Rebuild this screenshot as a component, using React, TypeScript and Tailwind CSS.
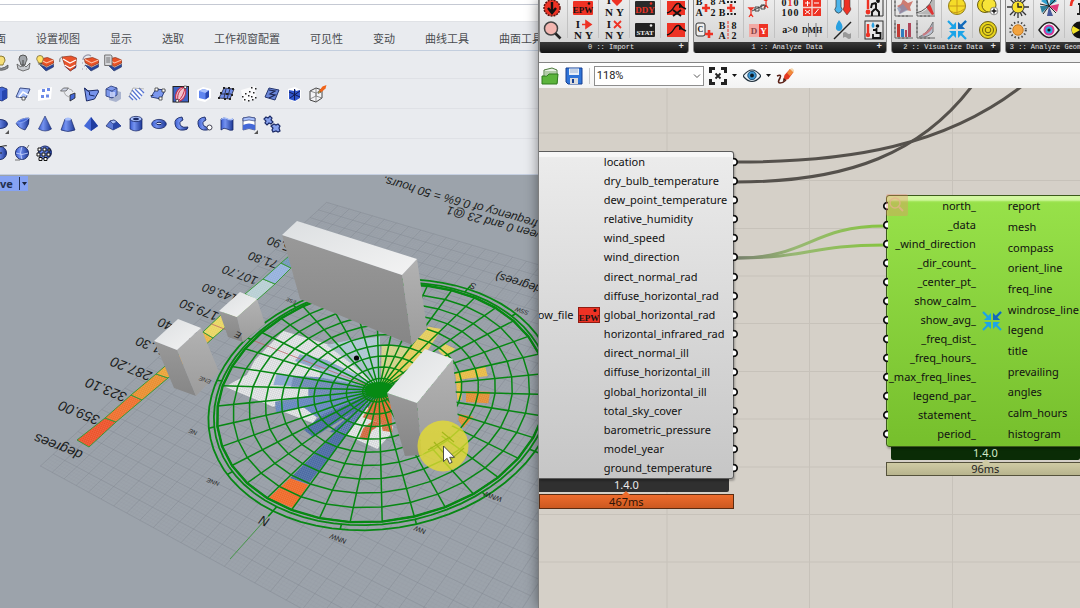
import React from "react";

/* ---------- perspective of the ground plane ---------- */
type Pt = [number, number];

function project(a: number, b: number): Pt {
  const w = 1 + 0.083 * a - 0.09 * b;
  return [(379 - 111.5 * a - 130.6 * b) / w, (390 - 24 * a + 75 * b) / w];
}
function polar(r: number, deg: number): Pt {
  const t = (deg * Math.PI) / 180;
  return project(r * Math.cos(t), r * Math.sin(t));
}
const fmt = (p: Pt) => `${p[0].toFixed(1)} ${p[1].toFixed(1)}`;
function ringPath(r: number, start: number, step: number) {
  let d = "";
  for (let t = start; t < start + 360; t += step) d += (d ? "L" : "M") + fmt(polar(r, t));
  return d + "Z";
}
function gridPath(step: number) {
  let d = "";
  const n = Math.round(1.4 / step);
  for (let i = -n; i <= n; i++) {
    const k = i * step;
    d += `M${fmt(project(k, -1.4))}L${fmt(project(k, 1.4))}M${fmt(project(-1.4, k))}L${fmt(project(1.4, k))}`;
  }
  return d;
}
function spokes() {
  let d = "";
  for (let t = 5; t < 360; t += 10) d += `M${fmt(polar(0, t))}L${fmt(polar(0.95, t))}`;
  return d;
}
function ticks() {
  let d = "";
  for (let i = 0; i < 16; i++) d += `M${fmt(polar(0.965, i * 22.5))}L${fmt(polar(i % 4 ? 1 : 1.04, i * 22.5))}`;
  return d;
}
const rings = [1, 2, 3, 4, 5, 6, 7, 8, 9, 10].map((k) => ringPath(k * 0.095, 5, 10)).join("");

/* filled cells of the rose, drawn three times larger from (180, 260) */
const cells: [string, string][] = [
  ["#eff0f0", "135,380 200,345 225,300 310,213 400,240 470,262 530,290 600,370 400,410 278,440"],
  ["#a9c3cf", "440,255 510,240 600,230 600,370 560,350 500,300"],
  ["#87a3cf", "360,283 440,300 585,372 570,380 420,330 345,303"],
  ["#9db9dc", "420,325 500,330 590,380 560,385 420,352"],
  ["#86a6d9", "290,342 340,347 335,378 280,375"],
  ["#6282b8", "340,347 420,352 590,385 590,395 385,410 385,382 332,380"],
  ["#5f82bb", "285,425 385,408 590,390 430,468 405,470 370,447 288,457"],
  ["#eff0f0", "310,455 370,442 410,472 400,490"],
  ["#44659f", "372,510 430,462 590,392 580,420 400,532"],
  ["#44659f", "450,515 540,440 590,400 540,490 500,525"],
  ["#44659f", "330,655 500,485 580,400 600,400 385,672"],
  ["#ee6420", "265,715 330,655 385,674 340,745"],
  ["#cfce83", "605,255 690,262 655,320 610,370 603,370"],
  ["#e2ca55", "690,260 745,200 785,207 740,275 640,370 610,368"],
  ["#e2ca55", "775,272 795,252 825,266 800,295"],
  ["#e6b83e", "825,340 915,318 923,348 828,360"],
  ["#e6b83e", "828,358 845,360 845,420 832,420"],
  ["#e08a2c", "858,394 930,395 925,430 858,426"],
  ["#e08a2c", "838,462 880,470 850,503 835,480"],
  ["#eff0f0", "545,462 560,440 640,500 632,522 592,567 500,525"],
  ["#e06428", "580,420 632,400 637,517 608,512 603,490 548,472"],
  ["#dd5a24", "550,505 578,482 606,490 575,512 562,540 538,536"],
];

const legendBar: [string, string][] = [
  ["#ec4c22", "77,440 105,418 116,422 89,447"],
  ["#ee6a26", "105,418 131,395 142,400 116,422"],
  ["#e88a28", "131,395 156,374 168,378 142,400"],
  ["#eba030", "156,374 180,353 191,358 168,378"],
  ["#ecb23c", "180,353 203,332 213,338 191,358"],
  ["#e8d45c", "203,332 224,312 236,318 213,338"],
  ["#dfe0a0", "224,312 245,294 257,300 236,318"],
  ["#b5cdd2", "245,294 263,279 275,284 257,300"],
  ["#91aedb", "263,279 281,263 291,268 275,284"],
  ["#6d93b8", "281,263 289,256 299,261 291,268"],
];

const sceneText: [string, number, number, number, number][] = [
  ["degrees", 58, 447, 14, 201],
  ["359.00", 79, 413, 14, 202],
  ["323.10", 106, 390, 14, 202],
  ["287.20", 131, 369, 14, 202],
  ["251.30", 155, 348, 13, 202],
  ["215.40", 177, 329, 13, 202],
  ["179.50", 199, 310, 13, 201],
  ["143.60", 220, 293, 12, 200],
  ["107.70", 240, 275, 12, 200],
  ["71.80", 263, 260, 12, 199],
  ["35.90", 282, 245, 12, 199],
  ["N", 264, 521, 13, 205],
  ["S", 473, 286, 9, 200],
  ["NE", 193, 432, 6, 200],
  ["NNE", 213, 482, 6, 200],
  ["NNW", 338, 539, 7, 200],
  ["NW", 420, 530, 7, 200],
  ["WNW", 493, 497, 7, 200],
  ["ESE", 291, 301, 5, 200],
  ["SSW", 522, 311, 6, 198],
];

const boxes: { top: string; left: string; right: string }[] = [
  { top: "297,221 417,259 402,275 282,235", left: "282,235 402,275 412,345 300,299", right: "402,275 417,259 427,329 412,345" },
  { top: "240,292 257,299 237,317 219,311", left: "219,311 237,317 243,342 228,337", right: "237,317 257,299 265,324 243,342" },
  { top: "178,319 201,328 177,350 154,341", left: "154,341 177,350 196,396 174,388", right: "177,350 201,328 219,372 196,396" },
  { top: "425,349 453,359 417,403 387,393", left: "387,393 417,403 422,455 405,456", right: "417,403 453,359 458,420 422,455" },
];

function Scene() {
  return (
    <svg className="block h-[433px] w-[539px] shrink-0" viewBox="0 175 539 433" role="img" aria-label="Wind rose model">
      <defs>
        <linearGradient id="topFace" x1="0" y1="0" x2="1" y2="1">
          <stop offset="0" stopColor="#dcdfe1" />
          <stop offset="1" stopColor="#f3f3f3" />
        </linearGradient>
        <linearGradient id="leftFace" x1="0" y1="0" x2="0" y2="1">
          <stop offset="0" stopColor="#999999" />
          <stop offset="1" stopColor="#868686" />
        </linearGradient>
        <linearGradient id="rightFace" x1="0" y1="0" x2="0" y2="1">
          <stop offset="0" stopColor="#b2b2b2" />
          <stop offset="1" stopColor="#9c9c9c" />
        </linearGradient>
        <pattern id="mesh" width="2" height="2" patternUnits="userSpaceOnUse" patternTransform="rotate(22)">
          <path d="M0 0H2M0 0V2" stroke="#ffffff" strokeWidth=".5" opacity=".35" fill="none" />
        </pattern>
        <pattern id="meshGray" width="2" height="2" patternUnits="userSpaceOnUse" patternTransform="rotate(22)">
          <path d="M0 0H2M0 0V2" stroke="#8d9399" strokeWidth=".6" opacity=".6" fill="none" />
        </pattern>
      </defs>
      <path d={gridPath(0.02)} stroke="#8a9099" strokeWidth="1" opacity=".08" fill="none" />
      <path d={gridPath(0.1)} stroke="#7d838b" strokeWidth="1" opacity=".32" fill="none" />
      <path d={`M${fmt(project(0, 1))}L230 559`} stroke="#4a9a4c" strokeWidth="1" />

      {legendBar.map(([c, p]) => (
        <g key={p}>
          <polygon points={p} fill={c} />
          <polygon points={p} fill="url(#mesh)" stroke="#3a9a3a" strokeWidth="1" />
        </g>
      ))}

      <g transform="translate(180 260) scale(.33333)">
        {cells.map(([c, p]) => (
          <polygon key={p} points={p} fill={c} />
        ))}
      </g>
      {cells.map(([c, p]) => {
        const pts = p
          .split(" ")
          .map((q) => q.split(",").map(Number))
          .map(([x, y]) => `${180 + x / 3},${260 + y / 3}`)
          .join(" ");
        return <polygon key={p} points={pts} fill={c === "#eff0f0" ? "url(#meshGray)" : "url(#mesh)"} />;
      })}
      <path d={`M${fmt(project(1.3, 0))}L${fmt(project(0, 0))}`} stroke="#c06a6a" strokeWidth="1" opacity=".8" />
      <g fill="none" stroke="#078813">
        <path d={rings} strokeWidth="1.5" />
        <path d={spokes()} strokeWidth="1.5" />
        <path d={ringPath(0.95, 5, 10)} strokeWidth="2.400" />
        <path d={ringPath(0.968, 0, 5)} strokeWidth="1.800" />
        <path d={ringPath(1, 0, 5)} strokeWidth="1.800" />
        <path d={ticks()} strokeWidth="1.6" />
      </g>
      <ellipse cx="379" cy="390" rx="14" ry="8" fill="#068a14" />
      <circle cx="356.500" cy="358" r="2.600" fill="#050505" />

      <g fill="#1b1d20" fontFamily="'Liberation Sans', sans-serif" fontStyle="italic">
        {sceneText.map(([t, x, y, s, r]) => (
          <text key={t} transform={`translate(${x} ${y}) rotate(${r})`} fontSize={s} textAnchor="middle" dominantBaseline="central">
            {t}
          </text>
        ))}
        <text transform="translate(384 176) rotate(196)" fontSize="12" textAnchor="end">
          shows frequency of 0.6% = 50 hours.
        </text>
        <text transform="translate(448 206) rotate(195.500)" fontSize="12" textAnchor="end">
          between 0 and 23 @1
        </text>
        <text transform="translate(497 272) rotate(197)" fontSize="12" textAnchor="end">
          (degrees)
        </text>
      </g>

      {boxes.map((b, i) => (
        <g key={b.top}>
          <polygon points={b.left} fill="url(#leftFace)" />
          <polygon points={b.right} fill="url(#rightFace)" />
          <polygon points={b.top} fill="url(#topFace)" />
          {i === 2 && (
            <text transform="translate(205 380) rotate(200)" fontSize="6" fontStyle="italic" fontFamily="'Liberation Sans', sans-serif" fill="#333" textAnchor="middle" dominantBaseline="central">
              ENE
            </text>
          )}
        </g>
      ))}
      <text transform="translate(238 335) rotate(205)" fontSize="9" fontStyle="italic" fontFamily="'Liberation Sans', sans-serif" fill="#222" textAnchor="middle" dominantBaseline="central">
        E
      </text>
      <circle cx="443" cy="446" r="25.500" fill="#e6dc2e" opacity=".78" />
      <path d="M428 450l22-13M434 442l16 18M442 432l12 10M448 462l16-14" stroke="#a4b81a" strokeWidth="1.200" fill="none" />
      <path d="M443.500 446v15.500l3.600-3.200 2.400 5.200 2.600-1.200-2.400-5h4.800z" fill="#fff" stroke="#3b3b3b" strokeWidth=".9" />
    </svg>
  );
}

/* ---------- modelling toolbar ---------- */
const BL = "#4468d8";
const DK = "#1b2a66";
const LT = "#a9c0fb";

const Layers = ({ front }: { front?: React.ReactNode }) => (
  <>
    <path d="M4 11l6 6 7.500-4v-3l-7 3z" fill="#27439c" stroke="#27355f" strokeWidth=".6" />
    <path d="M4 8.500l6.500 5 7-3.500V8l-7 3z" fill="#fff" stroke="#877" strokeWidth=".5" />
    <path d="M3.500 5l8-1.500L17.500 6v3l-7 3.500L4 8.500z" fill="#ea5226" stroke="#8c3018" strokeWidth=".7" />
    <path d="M4 5.500l6.500 3.500 7-3" stroke="#ffc1a6" fill="none" strokeWidth="1.100" />
    {front}
  </>
);
const bulb = (c: string) => (
  <g>
    <path d="M4 1.500a3.300 3.300 0 0 1 3.300 3.300c0 1.700-1.100 2.200-1.300 4.200H2.400C2.200 7 .7 6.500.7 4.800A3.300 3.300 0 0 1 4 1.500z" fill={c} stroke="#77683a" strokeWidth=".8" />
    <path d="M2.500 10h3.500" stroke="#444" strokeWidth="1.200" />
  </g>
);

const row1: Record<string, React.ReactNode> = {
  "Show object": (
    <>
      <path d="M10 2a4 4 0 0 1 4 4c0 2-1.500 2.500-2 5H8c-.5-2.500-2-3-2-5a4 4 0 0 1 4-4z" fill="#f6df78" stroke="#8b7a32" />
      <path d="M5 12q5 5 12-1v3q-6 4-12 1z" fill="#8b8f96" stroke="#444" strokeWidth=".7" />
    </>
  ),
  "Hide object": (
    <>
      <path d="M3 10l4 3 2-3 3 3 4-4-1 6-6 2-5-2z" fill="#c8cbd0" stroke="#555" strokeWidth=".8" />
      <path d="M9 1a4 4 0 0 1 4 4c0 2-1.500 2.500-2 6H7c-.5-3.500-2-4-2-6a4 4 0 0 1 4-4z" fill="#a2a6ab" stroke="#555" />
      <path d="M9 6v7" stroke="#444" />
    </>
  ),
  "Layer on": <Layers front={bulb("#ffe36a")} />,
  "Layer lock": (
    <>
      <path d="M5 12l6 5 6-3 .5-3-6 3z" fill="#27439c" />
      <path d="M3 3l9-1 5.500 2-1 9-5 4L6 12z" fill="#e9542c" stroke="#8c3018" strokeWidth=".7" />
      <path d="M4 5l7 4 6-3M5.500 11l5.500 3 5.500-3" stroke="#fff" strokeWidth="1.200" fill="none" />
      <path d="M.8 8V6a2.800 2.800 0 0 1 3-3" stroke="#777" fill="none" />
    </>
  ),
  "Layer match": <Layers front={<path d="M2 6a5 5 0 0 1 8-4M1 9h1M3 12h1M1 15h1M5 15h1" stroke="#99a" strokeWidth="1.200" fill="none" />} />,
  "Layer copy": (
    <Layers
      front={
        <>
          <path d="M.7 1h6l1.300 1v9.500H.7z" fill="#d6d8dc" stroke="#666" strokeWidth=".9" />
          <path d="M2.200 4h4M2.200 6h4M2.200 8h4" stroke="#555" strokeWidth=".8" />
        </>
      }
    />
  ),
};

const Cube = ({ c = BL }: { c?: string }) => (
  <>
    <path d="M4 6l4-2 6 1.500V12l-4 2.500L4 13z" fill={c} />
    <path d="M4 6l4-2 6 1.500L10.500 8z" fill={LT} />
    <path d="M10.500 8l3.500-2.500V12l-3.500 2.500z" fill="#2a49b4" />
  </>
);

const row2: Record<string, React.ReactNode> = {
  Box: (
    <>
      <path d="M5 4l6-2 5 2v9l-5 3-6-2z" fill={BL} stroke={DK} strokeWidth=".8" />
      <path d="M11 6l5-2v9l-5 3z" fill="#2746b0" />
    </>
  ),
  Surface: (
    <>
      <path d="M2 12l4-9 10 1-4 9z" fill={LT} stroke="#3c4d86" />
      <path d="M5 12l4-5 5 3" stroke="#fff" strokeWidth="1.500" fill="none" />
      <path d="M8 12h3v3H8z" fill="#fff" stroke="#222" strokeWidth=".7" />
    </>
  ),
  Points: (
    <>
      <path d="M2 5l14-3-1 12-13 2z" fill="#fff" />
      <path d="M6 4h3v3H6zM11 3h3v3h-3zM5 10h3v3H5zM10 9.500h3v3h-3z" fill="#6c8ae8" />
    </>
  ),
  Extrude: (
    <>
      <path d="M1.500 6l3-3h5l-2.500 3z" fill="#cfd5e6" stroke="#555" strokeWidth=".8" />
      <path d="M11 10l5-2v5l-5 3z" fill={BL} stroke="#222" strokeWidth=".8" />
      <path d="M10 4q3 0 4 3M5 7q1 4 5 5" stroke="#999" strokeWidth=".8" fill="none" />
    </>
  ),
  "Edge surface": (
    <>
      <path d="M2.500 3l3 3 10.500-1 .5 2-4 7-8 2z" fill="#7693ec" stroke={DK} />
      <path d="M2.500 3l5 4v3l5 1" stroke={DK} fill="none" />
    </>
  ),
  Solid: (
    <>
      <path d="M5 8l5-3 7 2v7l-5 3-7-2z" fill="#aab4cf" />
      <path d="M2 4l5-3 6 2v7l-5 3-6-2z" fill="#7c97ea" stroke="#334583" strokeWidth=".9" />
      <path d="M2 4l6 2 5-3M8 6v7" stroke="#334583" fill="none" strokeWidth=".8" />
      <path d="M6 7h5v5H6z" fill="#cfdafb" opacity=".8" />
    </>
  ),
  Hatch: (
    <>
      <path d="M2 12L6 3l11 1-5 11z" fill="#fff" />
      <path d="M2 11l4 4M3 8l7 7M5 5l8 9M8 4l7 7M12 3l5 5" stroke="#5876d3" strokeWidth="1.300" />
      <path d="M2 12L6 3l11 1" stroke="#888" strokeWidth=".6" fill="none" />
    </>
  ),
  Corner: (
    <>
      <path d="M2 12l5-8 9 1-4 9z" fill="#7b97ee" stroke="#2d3f80" />
      <path d="M6 3h3v3H6zM13 4h3v3h-3zM10 12h3v3h-3zM1.500 10.500h3" fill="#fff" stroke="#222" strokeWidth=".7" />
    </>
  ),
  Revolve: (
    <>
      <rect x="1" y="1.500" width="15.500" height="15.500" fill="#3f63c4" stroke="#222" />
      <ellipse cx="8.700" cy="9.200" rx="4.500" ry="7.400" transform="rotate(25 8.700 9.200)" fill="#f0c3cc" stroke="#c52a48" />
      <path d="M12 2C6 6 5 11 6 16M13 3C12 8 10 13 6 16" stroke="#c52a48" fill="none" />
      <path d="M12 1h2.500v2.500H12zM4 14.500h2.500V17H4z" fill="#fff" stroke="#222" strokeWidth=".6" />
    </>
  ),
  "Small box": (
    <>
      <path d="M2 5l6-3 8 2v9l-6 4-8-2z" fill="#fff" />
      <Cube c="#5f85f0" />
    </>
  ),
  "Grid points": (
    <>
      <path d="M2 13l5-10 10 1-4 10z" fill="#6f8ce6" stroke="#223" strokeWidth=".8" />
      <path d="M4 9h10M9 4L7 13M13 4l-3 10" stroke="#223" strokeWidth=".8" />
      <path d="M6 2h2v2H6zM11 2h2v2h-2zM15 3h2v2h-2zM3 7h2v2H3zM9 8h2v2H9zM14 9h2v2h-2zM1 12h2v2H1zM7 13h2v2H7zM12 13h2v2h-2z" fill="#222" />
    </>
  ),
  Cloud: (
    <>
      <path d="M1 5l14-4 1 12-13 4z" fill="#fff" opacity=".8" />
      <path d="M11 2h1.500v1.500H11zM15 3h1.500v1.500H15zM9 6h1.500v1.500H9zM13 7h1.500v1.500H13zM5 8h1.500v1.500H5zM2 11h1.500v1.500H2zM8 10h1.500v1.500H8zM11 11h1.500v1.500H11zM15 12h1.500v1.500H15zM4 14h1.500v1.500H4zM8 15h1.500v1.500H8zM12 14h1.500v1.500H12z" fill="#222" />
    </>
  ),
  Drape: (
    <>
      <path d="M2 12l4-9 10 2-4 10z" fill="#6a86d8" stroke="#24356f" />
      <path d="M6 5l6 1-5 3 5 1-6 3" stroke="#1b2450" strokeWidth="1.200" fill="none" />
    </>
  ),
  Star: (
    <>
      <path d="M3 4l7-2 6 3v8l-6 4-7-3z" fill="#fff" />
      <path d="M4 5l5 1 1-2 1 2 4-1v8l-5 3-6-2z" fill="#2f54cc" />
      <path d="M4 7l11 5M15 6L5 13M9.500 4v11" stroke="#111c52" />
    </>
  ),
  "Edit box": (
    <>
      <path d="M2 6l6-3 6 2v8l-6 4-6-2z" fill="#f4f4f6" stroke="#444" />
      <path d="M2 6l6 2 6-3M8 8v9M2 14l6-3 6 2M8 3v8" stroke="#777" fill="none" strokeWidth=".8" />
      <path d="M11 6l3.500-4.500L18.500 0l-1 3.500-4.500 4z" fill="#f0641a" />
      <path d="M10 8.500l1-2.800 2 1.500z" fill="#e8c23c" stroke="#333" strokeWidth=".5" />
    </>
  ),
};

const row3: Record<string, React.ReactNode> = {
  Ellipsoid: <ellipse cx="9" cy="9" rx="7.500" ry="4.500" fill="url(#blueH)" stroke={DK} strokeWidth=".9" />,
  Paraboloid: (
    <>
      <path d="M2 8q5-5 13-5 1 6-4 12Q4 13 2 8z" fill="url(#blueH)" stroke={DK} strokeWidth=".7" />
      <path d="M2 8q5-5 13-5-4 5-13 5z" fill={BL} stroke={LT} strokeWidth=".6" />
    </>
  ),
  Cone: <path d="M9 1l6.500 13q-6 4-13 0z" fill="url(#blueH)" stroke={DK} strokeWidth=".6" />,
  "Truncated cone": (
    <>
      <path d="M6 4h6l4 11q-7 3-14 0z" fill="url(#blueH)" stroke={DK} strokeWidth=".7" />
      <ellipse cx="9" cy="4" rx="3" ry="1.500" fill={LT} />
    </>
  ),
  Pyramid: (
    <>
      <path d="M9 2l7 9-7 5-7-5z" fill={BL} />
      <path d="M9 2l7 9-7 5z" fill="#203da0" />
    </>
  ),
  "Truncated pyramid": (
    <>
      <path d="M6 6l4-1 3 2 4 4-8 4-7-4z" fill="#5c7ad6" stroke={DK} strokeWidth=".7" />
      <path d="M6 6l4-1 3 2-4 2z" fill={LT} stroke={DK} strokeWidth=".6" />
      <path d="M9 9l4-2 4 4-8 4z" fill="#2a47a8" />
    </>
  ),
  Tube: (
    <>
      <path d="M3 4v10q6 4 12 0V4z" fill="url(#blueH)" stroke={DK} strokeWidth=".7" />
      <ellipse cx="9" cy="4" rx="6" ry="2.600" fill={LT} stroke={DK} strokeWidth=".8" />
      <ellipse cx="9" cy="4" rx="3" ry="1.200" fill={DK} />
    </>
  ),
  Torus: (
    <>
      <ellipse cx="9" cy="9" rx="7.300" ry="4.600" fill="url(#blueH)" stroke={DK} strokeWidth=".8" />
      <ellipse cx="9" cy="8.500" rx="2.800" ry="1.200" fill="#dfe5f6" stroke={DK} />
    </>
  ),
  Pipe: <path d="M10 2Q2 3 3 9q1 7 9 6 4 0 4-3-5 1-7-1Q6 7 11 5z" fill="url(#blueH)" stroke={DK} strokeWidth=".9" />,
  "Capped pipe": (
    <>
      <path d="M10 2Q2 3 3 9q1 7 9 6 3 0 4-3-5 1-7-1Q6 7 11 5z" fill="url(#blueH)" stroke={DK} strokeWidth=".9" />
      <circle cx="14.500" cy="12.500" r="2.500" fill="#fff" stroke="#445" />
    </>
  ),
  Slab: (
    <>
      <path d="M3 4q3-2 6 0t6 0v11q-3 1-6-1t-6 1z" fill="url(#blueH)" stroke={DK} strokeWidth=".8" />
      <path d="M3 4q3-3 6-1t6 0v2q-3 1-6-.500T3 5z" fill={LT} />
    </>
  ),
  "Extrude curve": (
    <>
      <path d="M3 3q6-2 12 0v12q-6-3-12 0z" fill="#fff" stroke={DK} strokeWidth=".7" />
      <path d="M3 3q6-2 12 0v3q-6-2-12 0z" fill={LT} stroke={DK} strokeWidth=".6" />
      <path d="M3 10q6-3 12 0v5q-6-3-12 0z" fill={BL} />
    </>
  ),
  Boss: (
    <path
      d="M3 2l2 1 2-2 2 2-1 2 2 2-2 2-2-1-2 2-2-2 1-2-2-2zM11 9l2 1 2-1 2 2-1 2 1 3-2 1-2-1-3 1-1-2 1-2-2-2z"
      fill="#86a0ec"
      stroke={DK}
      strokeWidth="1.200"
    />
  ),
};

const row4: Record<string, React.ReactNode> = {
  "Sphere A": (
    <>
      <circle cx="9" cy="9" r="6.500" fill="url(#blueH)" stroke={DK} />
      <path d="M8 3q8-2 8-1M6 9h5" stroke="#222" fill="none" />
    </>
  ),
  "Sphere B": (
    <>
      <circle cx="9" cy="9" r="6.500" fill="url(#blueH)" stroke={DK} />
      <path d="M9 2.500q-3 6 0 13M3 9q6 3 12 0" stroke="#cbd8ff" fill="none" strokeWidth=".8" />
      <path d="M14 4l2-3M2 16h5" stroke="#555" strokeWidth=".8" />
    </>
  ),
  "Sphere points": (
    <>
      <circle cx="10" cy="8.500" r="6.500" fill="url(#blueH)" stroke={DK} />
      <path d="M3 4h3v3H3zM8 4h3v3H8zM2 9h3v3H2zM7 9h3v3H7zM12 9h3v3h-3zM4 13.500h3v3H4zM9 13.500h3v3H9zM13 5h2v2h-2z" fill="#fff" stroke="#111" />
    </>
  ),
};

function IconRow({ icons, className, frame }: { icons: Record<string, React.ReactNode>; className: string; frame: string }) {
  return (
    <div className={`shrink-0 ${frame}`}>
      <div className={`-ml-[9px] flex items-center justify-between ${className}`}>
        {Object.entries(icons).map(([name, art]) => (
          <button key={name} aria-label={name} className="size-[18px] shrink-0">
            <svg viewBox="0 0 18 18" className="size-[18px] overflow-visible">
              {art}
            </svg>
          </button>
        ))}
      </div>
    </div>
  );
}

function ModelWindow() {
  return (
    <section className="flex w-[49.8%] shrink-0 flex-col overflow-hidden bg-[#e9ebef]">
      <svg className="absolute size-0">
        <defs>
          <linearGradient id="blueH">
            <stop offset="0" stopColor="#3a5cd0" />
            <stop offset=".35" stopColor="#7593f0" />
            <stop offset="1" stopColor="#1c3796" />
          </linearGradient>
        </defs>
      </svg>
      <div className="h-[5px] shrink-0 border-b border-[#c5c9d3] bg-white" />
      <div className="h-4 shrink-0 bg-white" />
      <nav className="flex h-[30px] shrink-0 items-center gap-[30px] overflow-hidden border-t border-b border-t-[#e0e2e6] border-b-[#c3cede] pt-1.5 text-[11px] whitespace-nowrap text-[#4a4c50]">
        <button className="-ml-[5px]">面</button>
        {["设置视图", "显示", "选取", "工作视窗配置", "可见性", "变动", "曲线工具", "曲面工具"].map((t) => (
          <button key={t}>{t}</button>
        ))}
      </nav>
      <IconRow icons={row1} frame="border-b border-[#dfe1e6] pb-[3px]" className="h-6 w-[131px]" />
      <IconRow icons={row2} frame="border-b border-[#dfe1e6]" className="h-[29px] w-[335px]" />
      <div className="relative">
        <IconRow icons={row3} frame="border-b border-[#dfe1e6]" className="h-[29px] w-[290px]" />
        <svg className="absolute top-5 left-1 h-2 w-64" viewBox="0 0 256 8">
          <path d="M1 5l4-4v4zM250 5l4-4v4z" fill="#555" />
        </svg>
      </div>
      <IconRow icons={row4} frame="h-[36px] border-b border-[#c6d0e2]" className="h-[28px] w-[62px]" />
      <div className="relative min-h-0 flex-1 overflow-hidden bg-[#9ca3ab]">
        <Scene />
        <button className="absolute top-px left-0 flex h-[15px] w-7 items-center bg-[#86a3f3] text-[11px] font-bold text-[#24304f]">
          <span className="w-[20px] border-r border-[#24304f] text-left leading-[13px]">ve</span>
          <svg viewBox="0 0 7 4" className="ml-px h-1 w-[7px]">
            <path d="M1 0h5L3.500 3.500z" fill="#1b2540" />
          </svg>
        </button>
      </div>
    </section>
  );
}

/* ---------- component ribbon ---------- */
const RED = "#ee3224";
const T = ({ x, y, s = 8, c = "#151515", children }: { x: number; y: number; s?: number; c?: string; children: string }) => (
  <text x={x} y={y} fontSize={s} fontWeight="bold" fill={c} textAnchor="middle" fontFamily="'Liberation Serif', serif">
    {children}
  </text>
);
const NY = ({ y }: { y: number }) => (
  <>
    <T x={6} y={y} s={11}>N</T>
    <T x={17} y={y} s={11}>Y</T>
  </>
);
const Tag = ({ bg, fg, label }: { bg: string; fg: string; label: string }) => (
  <>
    <rect x="1" y="3" width="20" height="14" rx="1" fill={bg} />
    <circle cx="17" cy="5.500" r="1.300" fill={fg} />
    <T x={11} y={15} s={label.length > 3 ? 7 : 9} c={fg}>
      {label}
    </T>
  </>
);
const Mountain = ({ x }: { x?: boolean }) => (
  <>
    <rect x="2" y="3" width="18" height="14" fill={RED} />
    <path d="M2 15q4-1 7-6t6-3l2 3 4 2" stroke="#111" strokeWidth="1.400" fill="none" />
    <path d="M14 5l4 4-4 1z" fill="#111" />
    {x && <path d="M8 12l8 6M16 12l-8 6" stroke="#111" strokeWidth="1.800" />}
  </>
);
const Plus = ({ x, y }: { x: number; y: number }) => <path d={`M${x - 4} ${y}h8M${x} ${y - 4}v8`} stroke={RED} strokeWidth="2.600" />;
const Converge = () => (
  <>
    <path d="M2 1l7 7M20 1l-7 7M2 19l7-7M20 19l-7-7" stroke="#1ca4e8" strokeWidth="2.200" />
    <path d="M10 2v7H3zM12 2v7h7zM10 18v-7H3zM12 18v-7h7z" fill="#1ca4e8" />
    <path d="M12 2v7h7z" fill="#1668b8" />
    <path d="M20 1l-5 5" stroke="#1668b8" strokeWidth="2.200" />
  </>
);
const Axis = () => <path d="M2 0v18h18M1 4h2M1 8h2M1 12h2M6 17v2M10 17v2M14 17v2" stroke="#555" strokeWidth=".9" fill="none" />;

const g0 = [
  [
    [
      <circle cx="11" cy="10" r="8" fill={RED} stroke="#5a1510" strokeWidth="1.500" strokeDasharray="2 1" />,
      <path d="M11 4v10M7 10l4 5 4-5" stroke="#111" strokeWidth="2.400" fill="none" />,
    ],
    [
      <circle cx="10" cy="8.500" r="6.500" fill="#f3b6b0" stroke="#444" strokeWidth="1.500" />,
      <path d="M14.500 13.500l5 5" stroke="#222" strokeWidth="2.600" />,
    ],
  ],
  [[<Tag bg={RED} fg="#111" label="EPW" />], [<T x={6} y={8} s={11}>I</T>, <path d="M10 4.500h5M14 1l5 3.500L14 8z" stroke={RED} fill={RED} strokeWidth="1.600" />, <NY y={19} />]],
  [
    [<T x={6} y={6} s={11}>I</T>, <path d="M14 8L9 3a3 3 0 0 1 5-3 3 3 0 0 1 5 3z" fill={RED} />, <NY y={18} />],
    [<T x={6} y={8} s={11}>I</T>, <path d="M11 1l7 7M18 1l-7 7" stroke={RED} strokeWidth="1.800" />, <NY y={19} />],
  ],
  [[<Tag bg="#2a2a2a" fg={RED} label="DDY" />], [<Tag bg="#222" fg="#eee" label="STAT" />]],
  [[<Mountain x />], [<Mountain />]],
];
const g1 = [
  [
    [<T x={4} y={7} s={10}>B</T>, <T x={4} y={18} s={10}>A</T>, <T x={18} y={7} s={10}>8</T>, <T x={18} y={18} s={10}>2</T>, <Plus x={11} y={10} />],
    [<rect x="1" y="3" width="9" height="13" rx="2" fill="#eee" stroke="#333" />, <T x={5.5} y={12} s={8}>C</T>, <Plus x={14} y={14} />],
  ],
  [
    [<T x={5} y={6} s={10}>A</T>, <T x={5} y={18} s={10}>B</T>, <path d="M10 4h9M10 16h9" stroke="#222" strokeWidth="2" strokeDasharray="2 1.500" />, <Plus x={14} y={10} />],
    [<T x={5} y={9} s={10}>B</T>, <T x={5} y={19} s={10}>A</T>, <T x={17} y={9} s={10}>8</T>, <T x={17} y={19} s={10}>2</T>, <path d="M11 1v18" stroke={RED} strokeDasharray="3 1" />],
  ],
  [
    [<path d="M1 10h4l-2 2zM3 12v4M1 19l2-3 2 3M15 1h5l-2 2zM18 3v4M16 10l2-3 2 3" stroke={RED} strokeWidth="1.300" fill="none" />, <path d="M7 9h4v4H7zM13 7h4v4h-4zM4 13l12-6" fill="none" stroke="#333" strokeWidth=".9" />],
    [<rect x="1" y="4" width="10" height="13" fill="#f2a9a4" />, <rect x="11" y="4" width="9" height="13" fill={RED} />, <T x={6} y={14} s={9} c="#844">D</T>, <T x={15.5} y={14} s={9} c="#fff">Y</T>],
  ],
  [
    [<T x={5} y={8} s={10}>0</T>, <T x={11} y={8} s={10} c={RED}>1</T>, <T x={17} y={8} s={10}>0</T>, <T x={5} y={18} s={10}>1</T>, <T x={11} y={18} s={10}>0</T>, <T x={17} y={18} s={10}>0</T>],
    [<T x={11} y={13} s={10}>a&gt;0</T>],
  ],
  [
    [<rect x="2" y="1" width="18" height="17" fill={RED} />, <path d="M11 1v17M2 9.500h18" stroke="#f3d5d0" strokeWidth="1.400" />, <path d="M4 5h5M6.500 3v5M13 5h5M4 12l5 4M9 12l-5 4M13.500 16l4-5" stroke="#fff" fill="none" />],
    [<T x={4} y={13} s={8}>D</T>, <T x={11} y={13} s={8}>M</T>, <T x={18} y={13} s={8}>H</T>, <path d="M7.500 3v14M15 3v14" stroke="#666" strokeWidth=".8" />],
  ],
  [
    [<path d="M4 0v9a3.500 3.500 0 1 0 5 0V0z" fill="#4db4ea" stroke="#333" strokeWidth=".7" />, <path d="M12 0h6v9a3 3 0 0 1 0 4l-3 4-3-4a3 3 0 0 1 0-4z" fill={RED} stroke="#333" strokeWidth=".5" />],
    [<path d="M7 0q5 6 3 9a3.300 3.300 0 0 1-6 0Q3 6 7 0z" fill="#2aa0e0" />, <path d="M2 19L19 2" stroke="#222" strokeWidth="1.400" />, <path d="M11 13q2-2 4 0t4 0v5q-2 2-4 0t-4 0z" fill="#999" />],
  ],
  [
    [
      <path d="M20 0v18H2" fill="none" stroke="#333" />,
      <path d="M5 0v11" stroke={RED} strokeWidth="2.400" />,
      <circle cx="5" cy="14" r="2.400" fill={RED} />,
      <circle cx="15" cy="3" r="1.900" fill="#111" />,
      <path d="M13 5l-4 1-1 4M13 5v6l3 3v4M12 11l-3 3v4" stroke="#111" strokeWidth="1.900" fill="none" />,
    ],
    [
      <rect x="2" y="1" width="18" height="18" fill="#e6e6e6" stroke="#333" />,
      <path d="M5 4v10" stroke={RED} strokeWidth="2.400" />,
      <circle cx="5" cy="15" r="2.200" fill={RED} />,
      <path d="M10 2q3 4 0 6-3-2 0-6z" fill="#2aa0e0" />,
      <circle cx="14.500" cy="6" r="1.800" fill="#111" />,
      <path d="M13.500 8v5h4v5M13 10h-3M10 14v4h8" stroke="#111" strokeWidth="1.800" fill="none" />,
    ],
  ],
];
const g2 = [
  [
    [<Axis />, <path d="M4 8l4-2 2-5 5 4 5-2-3 6 1 4-5-1-7 4 2-5z" fill="#c9685c" opacity=".85" />, <path d="M4 10l6-4 5 6-8 4z" fill="#8090b4" opacity=".7" />],
    [<Axis />, <path d="M4 4h3v13H4z" fill="#c23a34" /> , <path d="M8 9h3v8H8z" fill="#2f7dc0" />, <path d="M12 10h2v7h-2zM15 3h3v14h-3z" fill="#b0455a" />],
  ],
  [
    [<Axis />, <path d="M1 16Q14 14 17 1h3v16z" fill="#aaa" opacity=".8" />, <path d="M11 9l4-3 4 10-2 1z" fill="#d33" />, <path d="M1 15Q12 13 18 0" stroke="#555" fill="none" />],
    [<Axis />, <path d="M4 17Q12 14 18 2v10q-5 6-14 5z" fill="#b8bfd0" stroke="#777" />, <path d="M8 15q6-3 9-8" stroke="#c87a80" strokeWidth="2" fill="none" />],
  ],
  [[<circle cx="11" cy="8" r="8.500" fill="#f5dc28" stroke="#8c7a14" />, <path d="M2.500 8h17M11 0v16.500M4 13q7 4 14-2" stroke="#c79a1a" fill="none" />], [<Converge />]],
  [
    [<circle cx="8" cy="7" r="7.500" fill="#eed71c" stroke="#6a5e10" />, <circle cx="12" cy="7" r="7" fill="#f7e438" stroke="#6a5e10" />, <circle cx="17" cy="13" r="3.800" fill="#fff" stroke="#444" strokeWidth=".6" />, <path d="M14.500 13h5M17 10.500v5" stroke="#111" strokeWidth="1.400" />],
    [<circle cx="11" cy="10" r="8.500" fill="#e8d41c" stroke="#6a5e10" />, <circle cx="11" cy="10" r="5.500" fill="none" stroke="#6a5e10" />, <circle cx="11" cy="10" r="2.800" fill="none" stroke="#6a5e10" />],
  ],
];
const g3 = [
  [
    [<path d="M11 -2v22M0 9h22M3 1l16 16M19 1L3 17M7 0l8 18M15 0L7 18" stroke="#333" strokeWidth="1.300" />, <circle cx="11" cy="9" r="6" fill="#f8e02a" stroke="#444" />, <path d="M11 5v4h4" stroke="#222" strokeWidth="1.400" fill="none" />],
    [<circle cx="11" cy="10" r="7.800" fill="none" stroke="#444" strokeWidth="2" strokeDasharray="1.400 2.200" />, <circle cx="11" cy="10" r="5.200" fill="#f2a440" stroke="#c57a20" />],
  ],
  [
    [<path d="M11 8L3 3l6-4z" fill="#2fa0d0" />, <path d="M11 8l-9 0 2 7z" fill="#2d7f9a" />, <path d="M11 8l2-9 6 4z" fill="#2b8fae" />, <path d="M11 8l10-2-2 8z" fill="#e03a78" />, <path d="M11 8l-2 10h6z" fill="#4a5a9a" />, <path d="M11 8L5 16M11 8l7 7M11 8L8 0M11 8l-9-2M11 8l7-7" stroke="#222" />],
    [<path d="M1 10q10-15 20 0-10 15-20 0z" fill="#f4f4f4" stroke="#222" strokeWidth="1.500" />, <circle cx="11" cy="10" r="5.500" fill="#d8389a" />, <circle cx="11" cy="10" r="3.500" fill="#28a8e0" />, <circle cx="11" cy="10" r="1.600" fill="#111" />],
  ],
  [
    [<path d="M2 8a9 9 0 0 1 16-6" stroke={RED} strokeWidth="2.500" fill="none" />, <path d="M11 6v10M8 16h7M9 6h4" stroke="#222" strokeWidth="2" />],
    [<circle cx="11" cy="10" r="8.500" fill="#111" />, <path d="M11 10L4 6a8 8 0 0 0 0 8zM11 10l0-8 6 3zM11 10l0 8 6-3z" fill="#f1e22a" />],
  ],
];

type Col = React.ReactNode[][];
function Group({ title, cols, pairs, plus = true }: { title: string; cols: Col[]; pairs: number[][]; plus?: boolean }) {
  return (
    <div className="shrink-0 overflow-hidden rounded-b-[3px] border-x border-[#8b8b8b] bg-gradient-to-b from-[#ececec] to-[#cfcfcf]">
      <div className="flex h-[42px] items-stretch gap-1 px-px">
        {pairs.map((pair, i) => (
          <React.Fragment key={i}>
            {i > 0 && <div className="mb-1 w-px bg-[#c2c2c2]" />}
            <div className="flex">
              {pair.map((c) => (
                <div key={c} className="-mt-0.5 flex w-[22px] flex-col gap-0.5">
                  {cols[c].map((art, r) => (
                    <button key={r} aria-label={`${title} ${c}.${r}`} className="h-5 w-[22px]">
                      <svg viewBox="0 0 22 20" className="h-5 w-[22px] overflow-visible">
                        {art.map((a, k) => (
                          <React.Fragment key={k}>{a}</React.Fragment>
                        ))}
                      </svg>
                    </button>
                  ))}
                </div>
              ))}
            </div>
          </React.Fragment>
        ))}
      </div>
      <div className="flex h-[11px] items-center bg-gradient-to-b from-[#3a3a3a] to-[#151515] px-1 font-['Liberation_Mono',monospace] text-[7px] leading-[9px] text-[#e6e6e6]">
        <span className="flex-1 text-center whitespace-pre">{title}</span>
        {plus && <span className="text-[9px] font-bold">+</span>}
      </div>
    </div>
  );
}

/* ---------- canvas nodes ---------- */
const epwOutputs = [
  "location", "dry_bulb_temperature", "dew_point_temperature", "relative_humidity", "wind_speed", "wind_direction",
  "direct_normal_rad", "diffuse_horizontal_rad", "global_horizontal_rad", "horizontal_infrared_rad", "direct_normal_ill",
  "diffuse_horizontal_ill", "global_horizontal_ill", "total_sky_cover", "barometric_pressure", "model_year", "ground_temperature",
];
const roseInputs = [
  "north_", "_data", "_wind_direction", "_dir_count_", "_center_pt_", "show_calm_", "show_avg_", "_freq_dist_",
  "_freq_hours_", "_max_freq_lines_", "legend_par_", "statement_", "period_",
];
const roseOutputs = [
  "report", "mesh", "compass", "orient_line", "freq_line", "windrose_line", "legend", "title", "prevailing", "angles",
  "calm_hours", "histogram",
];

const Caret = ({ className }: { className?: string }) => (
  <svg viewBox="0 0 5 3" className={`h-[3px] w-[5px] ${className ?? ""}`}>
    <path d="M0 0h5L2.500 3z" fill="#111" />
  </svg>
);

function Toolbar() {
  return (
    <div className="flex h-[26px] shrink-0 items-center border-t border-[#858585] bg-gradient-to-b from-white to-[#f3f3f3] pl-[2px]">
      <button aria-label="Open" className="size-[18px]">
        <svg viewBox="0 0 18 18" className="size-[18px]">
          <path d="M3 3l8-2 5 2v13H3z" fill="#e8f0e4" stroke="#4b7a3a" />
          <path d="M4 5h11M4 7h11" stroke="#7da66c" />
          <path d="M1 9h5l2-2h9l-1 10H1z" fill="#5cb43c" stroke="#2f7a1d" />
        </svg>
      </button>
      <button aria-label="Save" className="ml-1.5 size-[18px]">
        <svg viewBox="0 0 18 18" className="size-[18px]">
          <path d="M1 1h16v16H3l-2-2z" fill="#2f74d8" stroke="#163f91" />
          <path d="M4 1.500h10v6.500H4z" fill="#e8eff8" />
          <path d="M5 3h8M5 5h8" stroke="#8aa4c8" strokeWidth=".8" />
          <path d="M5 11h8v6H5z" fill="#dcdcdc" />
          <path d="M7 12h2v4H7z" fill="#163f91" />
        </svg>
      </button>
      <div className="mr-1 ml-1.5 h-4 w-px bg-[#c9c9c9]" />
      <div className="relative">
        <select aria-label="Zoom level" className="block h-5 w-[110px] appearance-none border border-[#8e8e8e] bg-white pl-0.5 font-['Roboto',sans-serif] text-[11px] leading-[18px] text-[#222]">
          <option>118%</option>
        </select>
        <svg viewBox="0 0 8 5" className="pointer-events-none absolute top-2 right-[3px] h-[5px] w-2">
          <path d="M1 .5l3 3 3-3" stroke="#555" fill="none" />
        </svg>
      </div>
      <button aria-label="Zoom extents" className="ml-[5px] flex items-center">
        <svg viewBox="0 0 18 18" className="size-[18px]">
          <path d="M1.500 6V1.500H6M12 1.500h4.500V6M16.500 12v4.500H12M6 16.500H1.500V12" stroke="#222" strokeWidth="3" fill="none" />
          <path d="M6.500 6.500l5 5M11.500 6.500l-5 5" stroke="#222" strokeWidth="1.800" />
        </svg>
        <Caret className="ml-[5px]" />
      </button>
      <button aria-label="Preview" className="ml-1.5 flex items-center">
        <svg viewBox="0 0 18 14" className="h-[14px] w-[18px]">
          <path d="M0 7q9-12 18 0-9 11-18 0z" fill="#e9f3fa" stroke="#23323d" strokeWidth="1.200" />
          <circle cx="9" cy="6.500" r="4.200" fill="#3d98d4" stroke="#1b4f78" />
          <circle cx="9" cy="6.500" r="1.900" fill="#0c1c28" />
        </svg>
        <Caret className="ml-[5px]" />
      </button>
      <button aria-label="Sketch" className="ml-[5px]">
        <svg viewBox="0 0 18 18" className="size-[18px]">
          <path d="M1 9q5-2 3 2-3 5 0 5t6-3" stroke="#5a2016" strokeWidth="1.600" fill="none" />
          <path d="M7 14l1.500-6L14 2l3.500 3-5 7z" fill="#e23a22" />
          <path d="M14 2l3.500 3-3.500 4-3-3z" fill="#f08a3a" />
          <path d="M16 1l2 2v3l-4-4z" fill="#f6d9b0" />
          <path d="M7 14l.7-3 2.300 2z" fill="#33291f" />
        </svg>
      </button>
    </div>
  );
}

function Port({ side }: { side: "left" | "right" }) {
  return (
    <span className={`absolute top-1/2 h-[9px] w-[6px] -translate-y-1/2 overflow-hidden ${side === "right" ? "-right-[6px]" : "-left-[5px]"}`}>
      <svg viewBox="0 0 6 9" className="h-[9px] w-[6px]">
        <circle cx={side === "right" ? 0.8 : 5.2} cy="4.500" r="3.400" fill="#fff" stroke="#111" strokeWidth="1.800" />
      </svg>
    </span>
  );
}

function EpwNode() {
  return (
    <div className="absolute top-[63px] left-0 w-[195px]">
      <div className="relative flex h-[328px] rounded-r-[3px] border border-l-0 border-[#5c5c5c] bg-gradient-to-b from-[#ececec] to-[#c6c6c6] shadow-[inset_0_5px_1px_rgba(255,255,255,0.6),1px_2px_2px_rgba(0,0,0,0.25)]">
        <div className="flex w-[65px] items-center">
          <span className="-ml-px w-10 text-[11px] whitespace-nowrap text-[#111]">ow_file</span>
          <svg viewBox="0 0 22 16" className="h-4 w-[22px] shrink-0">
            <rect x=".5" y=".5" width="21" height="15" fill={RED} stroke="#8f1c12" />
            <circle cx="17" cy="3.500" r="1.500" fill="#111" />
            <T x={11} y={13.500} s={9}>
              EPW
            </T>
          </svg>
        </div>
        <ul className="flex flex-1 flex-col">
          {epwOutputs.map((o) => (
            <li key={o} className="relative flex flex-1 items-center text-[11px] leading-3">
              {o}
              <Port side="right" />
            </li>
          ))}
        </ul>
      </div>
      <div className="mr-[5px] h-[13px] rounded-br-[2px] bg-[#303030] pr-[15px] text-center text-[11px] leading-[12px] text-[#ececec]">1.4.0</div>
      <div className="relative mt-[2px] flex h-[15px] items-center justify-center border border-[#5a2c12] bg-gradient-to-b from-[#ee6c2c] to-[#cc5820] pr-[20px] text-[11px] leading-[13px] text-[#2c1408]">
        467ms
        <svg viewBox="0 0 8 4" className="absolute -top-1 left-[82px] h-1 w-2">
          <path d="M0 4l4-4 4 4z" fill="#ee6c2c" />
        </svg>
      </div>
    </div>
  );
}

function RoseNode() {
  return (
    <div className="absolute top-[107px] left-[347px] w-[199px]">
      <div className="relative flex h-[252px] rounded-[3px] border border-[#3c5a1c] bg-gradient-to-b from-[#98e24a] to-[#76bf2c] shadow-[inset_0_5px_2px_rgba(230,255,190,0.75),1px_2px_2px_rgba(0,0,0,0.25)]">
        <ul className="flex w-[89px] flex-col pb-0.5 text-right">
          {roseInputs.map((o) => (
            <li key={o} className="relative flex flex-1 items-center justify-end text-[11px] leading-3">
              {o}
              <Port side="left" />
            </li>
          ))}
        </ul>
        <div className="flex w-8 items-center justify-center">
          <svg viewBox="0 0 22 20" className="h-5 w-[22px]">
            <Converge />
          </svg>
        </div>
        <ul className="flex flex-1 flex-col pb-0.5">
          {roseOutputs.map((o) => (
            <li key={o} className="flex flex-1 items-center text-[11px] leading-3">
              {o}
            </li>
          ))}
        </ul>
        <svg viewBox="0 0 22 22" className="absolute -top-[2px] -left-px size-[22px]">
          <rect width="22" height="22" rx="2" fill="#ee8a6a" opacity=".35" />
          <circle cx="9" cy="9" r="5" fill="none" stroke="#e8b090" strokeWidth="1.500" opacity=".7" />
          <path d="M13 13l4 4" stroke="#e8b090" strokeWidth="2" opacity=".7" />
        </svg>
      </div>
      <div className="mx-[5px] h-[13px] rounded-b-[2px] bg-[#0a2c06] text-center text-[11px] leading-[12px] text-[#d4ecc8]">1.4.0</div>
      <div className="relative mt-[2px] flex h-[14px] items-center justify-center border border-[#55523c] bg-gradient-to-b from-[#cfcba4] to-[#b8b48e] text-[11px] leading-3 text-[#222]">
        96ms
        <svg viewBox="0 0 8 4" className="absolute -top-1 left-[95px] h-1 w-2">
          <path d="M0 4l4-4 4 4z" fill="#cfcba4" />
        </svg>
      </div>
    </div>
  );
}

function NodeWindow() {
  return (
    <section className="relative z-10 flex min-w-0 flex-1 flex-col border-l border-[#7d7d7d] bg-[#f0f0f0] shadow-[0_0_12px_rgba(0,0,0,0.45)]">
      <div className="flex h-[62px] shrink-0 gap-1 overflow-hidden pb-[9px]">
        <Group title="0 :: Import" cols={g0} pairs={[[0], [1], [2], [3], [4]]} />
        <Group title="1 :: Analyze Data" cols={g1} pairs={[[0, 1], [2], [3, 4], [5], [6]]} />
        <Group title="2 :: Visualize Data" cols={g2} pairs={[[0, 1], [2], [3]]} />
        <Group title="3 :: Analyze Geometry" cols={g3} pairs={[[0], [1], [2]]} plus={false} />
      </div>
      <Toolbar />
      <div className="relative min-h-0 flex-1 overflow-hidden bg-[#d5d0c8] font-['Noto_Sans',sans-serif] text-[#111]">
        <svg className="absolute top-0 left-0 h-[520px] w-[542px]" viewBox="539 88 542 520">
          <defs>
            <linearGradient id="wire">
              <stop offset="0" stopColor="#77806c" />
              <stop offset=".4" stopColor="#98b873" />
              <stop offset="1" stopColor="#86c440" />
            </linearGradient>
          </defs>
          <path
            d="M667 88V608M809.500 88V608M952.500 88V608M539 133H1081M539 180.500H1081M539 228.500H1081M539 276H1081M539 323.500H1081M539 371.500H1081M539 419H1081M539 467H1081M539 514.500H1081M539 562H1081"
            stroke="#bdb8b0"
            strokeWidth="1"
            opacity=".55"
          />
          <g fill="none" strokeWidth="3" stroke="#55514c">
            <path d="M737 162C850 162 945 146 1022 86" />
            <path d="M737 182C850 182 922 152 972 86" />
          </g>
          <g fill="none" strokeWidth="3" stroke="url(#wire)">
            <path d="M737 258C808 258 812 226 884 226" />
            <path d="M737 258C808 258 812 245 884 245" />
          </g>
        </svg>
        <EpwNode />
        <RoseNode />
      </div>
    </section>
  );
}

export default function App() {
  return (
    <main className="flex h-screen w-full overflow-hidden bg-white font-['Noto_Sans','Noto_Sans_CJK_SC',sans-serif]">
      <ModelWindow />
      <NodeWindow />
    </main>
  );
}
